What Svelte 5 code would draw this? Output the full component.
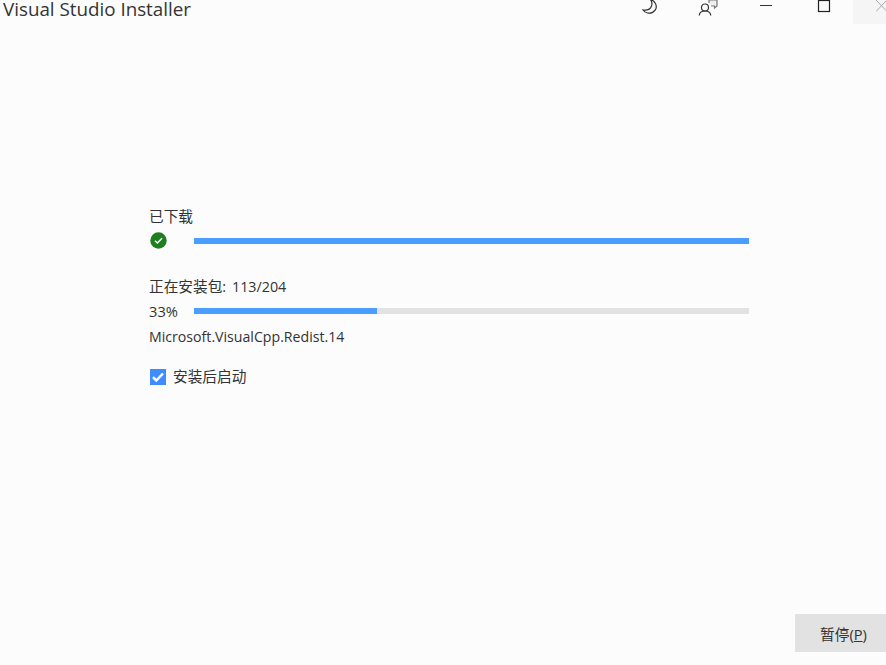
<script lang="ts">
  const installed = 113
  const total = 204
  const percent = 33
  let launchAfter = $state(true)
</script>

<div class="window">
  <header class="titlebar">
    <div class="title">Visual Studio Installer</div>
    <div class="controls">
      <button class="ctl theme" aria-label="theme">
        <svg width="18" height="18" viewBox="0 0 18 18" fill="none" stroke="#333" stroke-width="1.2">
          <path d="M10-1C15 1 17 5 16 8.500 14.800 12 11 13.800 7.500 13 5.500 12.500 4 11.500 3 10 7 10.500 10.500 9 11.500 6 12.500 3 12 1 10-1Z" />
        </svg>
      </button>
      <button class="ctl account" aria-label="account">
        <svg width="20" height="20" viewBox="0 0 20 20" fill="none" stroke="#333" stroke-width="1.2">
          <circle cx="7" cy="7.500" r="3.500" />
          <path d="M1.200 15.500c.3-3 2.500-4.500 5.800-4.500s5.500 1.500 5.800 4.500" />
          <path d="M11 3V0h8v6l-2.500 2V6H13" stroke="#777" fill="#eee" />
        </svg>
      </button>
      <button class="ctl min" aria-label="minimize">
        <svg width="14" height="14" viewBox="0 0 14 14" stroke="#333" stroke-width="1"><path d="M1 5.500h12" /></svg>
      </button>
      <button class="ctl max" aria-label="maximize">
        <svg width="14" height="14" viewBox="0 0 14 14" fill="none" stroke="#222" stroke-width="1.200"><rect x="1.500" y="0.500" width="11" height="11" /></svg>
      </button>
      <button class="ctl close" aria-label="close">
        <svg width="14" height="14" viewBox="0 0 14 14" stroke="#aaa" stroke-width="1"><path d="M0 0l11 11.500M11 0L0 11.500" /></svg>
      </button>
    </div>
  </header>

  <main class="content">
    <section class="step">
      <div class="label">已下载</div>
      <div class="row">
        <span class="lead">
          <svg width="17" height="17" viewBox="0 0 17 17">
            <circle cx="8.500" cy="8.500" r="8.200" fill="#1f7f1f" />
            <path d="M5 8.700l2.400 2.300L12 6.300" fill="none" stroke="#fff" stroke-width="1.500" />
          </svg>
        </span>
        <div class="track"><div class="fill" style="width: 100%"></div></div>
      </div>
    </section>

    <section class="step second">
      <div class="label">正在安装包: <span class="num">{installed}/{total}</span></div>
      <div class="row">
        <span class="lead pct">{percent}%</span>
        <div class="track"><div class="fill" style="width: {percent}%"></div></div>
      </div>
      <div class="pkg">Microsoft.VisualCpp.Redist.14</div>
    </section>

    <label class="check">
      <input type="checkbox" bind:checked={launchAfter} />
      <span class="box">
        {#if launchAfter}
          <svg width="16" height="16" viewBox="0 0 16 16">
            <path d="M3 8.200l3.300 3.300L13 4.500" fill="none" stroke="#fff" stroke-width="2.500" />
          </svg>
        {/if}
      </span>
      安装后启动
    </label>
  </main>

  <footer class="actions">
    <button class="pause">暂停(<u>P</u>)</button>
  </footer>
</div>

<style>
  :global(body) {
    background: #fcfcfc;
  }

  .window {
    width: 886px;
    height: 665px;
    overflow: hidden;
    display: flex;
    flex-direction: column;
    background: #fcfcfc;
    color: #333;
    font-family: "Open Sans", "Noto Sans CJK SC", sans-serif;
    font-size: 14.67px;
  }

  .titlebar {
    height: 24px;
    flex: none;
    display: flex;
    justify-content: space-between;
    overflow: hidden;
  }

  .title {
    font-size: 18.8px;
    line-height: 18px;
    padding-left: 3px;
  }

  .controls {
    display: flex;
  }

  .ctl {
    border: none;
    background: none;
    padding: 0;
    display: flex;
    justify-content: center;
    height: 24px;
    overflow: hidden;
  }

  .ctl svg {
    flex: none;
  }

  .theme { width: 18px; margin-right: 40px; }
  .account { width: 20px; margin-right: 41px; }
  .min { width: 14px; margin-right: 44px; }
  .max { width: 14px; margin-right: 22px; }
  .close { width: 33px; background: #f5f5f5; justify-content: flex-start; padding-left: 23px; }

  .content {
    flex: 1;
    padding: 183px 137px 0 149px;
    display: flex;
    flex-direction: column;
  }

  .label {
    line-height: 19px;
    height: 19px;
  }

  .num {
    font-size: 14.3px;
    margin-left: 2px;
  }

  .row {
    display: flex;
    align-items: center;
    height: 20px;
    margin-top: 5px;
  }

  .lead {
    width: 45px;
    flex: none;
    display: flex;
    align-items: center;
  }

  .lead svg {
    margin: -2px 0 0 1px;
  }

  .track {
    flex: 1;
    height: 6px;
    background: #e2e2e2;
  }

  .fill {
    height: 100%;
    background: #4a9eff;
  }

  .second {
    margin-top: 26px;
  }

  .pkg {
    margin-top: 6px;
    line-height: 19px;
    font-size: 14.15px;
  }

  .check {
    display: flex;
    align-items: center;
    gap: 7px;
    margin-top: 21px;
    margin-left: 1px;
    line-height: 19px;
  }

  .check input {
    display: none;
  }

  .box {
    width: 16px;
    height: 16px;
    background: #3f8cff;
    display: block;
  }

  .box svg {
    display: block;
  }

  .actions {
    flex: none;
    display: flex;
    justify-content: flex-end;
    padding-bottom: 13px;
  }

  .pause {
    width: 91px;
    height: 38px;
    border: none;
    background: #e2e2e2;
    color: #333;
    font: inherit;
    padding: 0 0 0 6px;
  }
</style>
